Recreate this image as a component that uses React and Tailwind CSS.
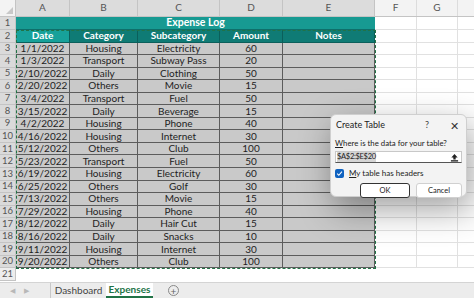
import React from 'react';

const cols = [
  { key: 'A', w: 'w-[54px]' },
  { key: 'B', w: 'w-[68px]' },
  { key: 'C', w: 'w-[82px]' },
  { key: 'D', w: 'w-[63px]' },
  { key: 'E', w: 'w-[92px]' },
];

const rows = [
  ['1/1/2022', 'Housing', 'Electricity', '60'],
  ['1/3/2022', 'Transport', 'Subway Pass', '20'],
  ['2/10/2022', 'Daily', 'Clothing', '50'],
  ['2/20/2022', 'Others', 'Movie', '15'],
  ['3/4/2022', 'Transport', 'Fuel', '50'],
  ['3/15/2022', 'Daily', 'Beverage', '15'],
  ['4/2/2022', 'Housing', 'Phone', '40'],
  ['4/16/2022', 'Housing', 'Internet', '30'],
  ['5/12/2022', 'Others', 'Club', '100'],
  ['5/23/2022', 'Transport', 'Fuel', '50'],
  ['6/19/2022', 'Housing', 'Electricity', '60'],
  ['6/25/2022', 'Others', 'Golf', '30'],
  ['7/13/2022', 'Others', 'Movie', '15'],
  ['7/29/2022', 'Housing', 'Phone', '40'],
  ['8/12/2022', 'Daily', 'Hair Cut', '15'],
  ['8/16/2022', 'Daily', 'Snacks', '10'],
  ['9/11/2022', 'Housing', 'Internet', '30'],
  ['9/20/2022', 'Others', 'Club', '100'],
];

const headers = ['Date', 'Category', 'Subcategory', 'Amount', 'Notes'];

const RowNum = ({ n, light }) => (
  <div
    className={`w-[16px] shrink-0 flex items-center justify-center text-[9.5px] text-[#555] border-r border-b border-[#c4c4c4] ${
      light ? 'bg-[#ededed]' : 'bg-[#dadada]'
    }`}
  >
    {n}
  </div>
);

const Blank = () => (
  <div className="flex-1 flex">
    <div className="w-[42px] shrink-0 border-r border-b border-[#e1e1e1]" />
    <div className="w-[41px] shrink-0 border-r border-b border-[#e1e1e1]" />
    <div className="flex-1 border-b border-[#e1e1e1]" />
  </div>
);

export default function App() {
  return (
    <div
      className="relative w-[474px] h-[298px] overflow-hidden bg-white"
      style={{ fontFamily: 'Lato, "Noto Sans", sans-serif' }}
    >
      {/* column headers */}
      <div className="flex h-[17px] bg-[#f3f3f3] border-b border-[#c4c4c4]">
        <div className="w-[16px] shrink-0 relative border-r border-[#c4c4c4]">
          <div className="absolute right-[2px] bottom-[2px] w-0 h-0 border-l-[7px] border-l-transparent border-b-[7px] border-b-[#c8c8c8]" />
        </div>
        {cols.map((c) => (
          <div
            key={c.key}
            className={`${c.w} shrink-0 flex items-end justify-center pb-[1px] text-[10px] text-[#555] bg-[#dcdcdc] border-r border-[#c4c4c4]`}
          >
            {c.key}
          </div>
        ))}
        <div className="w-[42px] shrink-0 flex items-end justify-center pb-[1px] text-[10px] text-[#555] border-r border-[#dcdcdc]">F</div>
        <div className="w-[41px] shrink-0 flex items-end justify-center pb-[1px] text-[10px] text-[#555] border-r border-[#dcdcdc]">G</div>
        <div className="flex-1" />
      </div>

      {/* row 1 */}
      <div className="flex h-[13px]">
        <RowNum n={1} />
        <div className="w-[359px] shrink-0 flex items-center justify-center bg-[#179a92] text-white text-[10.5px] font-bold border-b border-[#0f6f6a]">
          Expense Log
        </div>
        <Blank />
      </div>

      {/* row 2 */}
      <div className="flex h-[12.5px]">
        <RowNum n={2} />
        {headers.map((h, i) => (
          <div
            key={h}
            className={`${cols[i].w} shrink-0 flex items-center justify-center text-white text-[10px] font-bold border-r border-b border-[#0b5f5b] ${
              i === 0 ? 'bg-[#17a19a]' : 'bg-[#0f7b75]'
            }`}
          >
            {h}
          </div>
        ))}
        <Blank />
      </div>

      {/* data rows */}
      {rows.map((r, ri) => (
        <div key={ri} className="flex h-[12.55px]">
          <RowNum n={ri + 3} />
          {[...r, ''].map((v, i) => (
            <div
              key={i}
              className={`${cols[i].w} shrink-0 flex items-center justify-center text-[10px] text-[#1e1e1e] bg-[#c9c9c9] border-r border-b border-[#5c5c5c]`}
            >
              {v}
            </div>
          ))}
          <Blank />
        </div>
      ))}

      {/* row 21 */}
      <div className="flex h-[13px]">
        <RowNum n={21} light />
        <div className="flex-1" />
      </div>

      {/* selection marquee */}
      <div className="absolute left-[16px] top-[30px] w-[360px] h-[239px] border border-dashed border-[#217346] pointer-events-none" />

      {/* sheet tabs */}
      <div className="absolute left-0 right-0 bottom-0 h-[16px] flex items-stretch bg-[#ececec] border-t border-[#d4d4d4] text-[10px]">
        <div className="w-[50px] flex items-center gap-[9px] pl-[10px] text-[#b8b8b8] text-[7px]">
          <span>◀</span>
          <span>▶</span>
        </div>
        <div className="w-[56px] flex items-center justify-center text-[#444] border-l border-[#c8c8c8]">Dashboard</div>
        <div className="w-[47px] flex items-center justify-center font-bold text-[#217346] bg-white border-b-2 border-[#217346]">
          Expenses
        </div>
        <div className="w-[41px] flex items-center justify-center">
          <div className="w-[11px] h-[11px] rounded-full border border-[#888] flex items-center justify-center text-[#666] text-[10px] leading-none">
            +
          </div>
        </div>
      </div>

      {/* Create Table dialog */}
      <div className="absolute left-[330px] top-[114px] w-[137px] h-[83px] bg-[#f3f3f3] rounded-[6px] border border-[#cfcfcf] shadow-[4px_12px_34px_rgba(0,0,0,0.38)] px-[4px] pt-[3px] whitespace-nowrap">
        <div className="flex items-center h-[14px] pl-[1px] text-[9px] text-[#222]">
          <span className="w-[87px] shrink-0">Create Table</span>
          <span className="w-[8px] shrink-0 text-center text-[#444]">?</span>
          <span className="ml-[19px] text-[11px] text-[#333] leading-none">✕</span>
        </div>
        <div className="mt-[6px] text-[7.8px] text-[#222] leading-[11px]">
          <span className="underline">W</span>here is the data for your table?
        </div>
        <div className="mt-[2px] h-[12px] flex items-center bg-white border border-[#c8c8c8] border-b-[#555] pl-[1px]">
          <span className="bg-[#d5d5d5] text-[7.5px] text-[#222] leading-[10px] tracking-[-0.3px]">$A$2:$E$20</span>
          <span className="flex-1" />
          <svg width="9" height="9" viewBox="0 0 10 10" className="mr-[2px]">
            <rect x="1" y="8" width="8" height="1.5" fill="#222" />
            <path d="M5 1 L8.5 5 L6.3 5 L6.3 7.2 L3.7 7.2 L3.7 5 L1.5 5 Z" fill="#222" />
          </svg>
        </div>
        <div className="mt-[4px] flex items-center gap-[5px] text-[8px] text-[#222]">
          <div className="w-[9px] h-[9px] rounded-[2px] bg-[#0f62c0] flex items-center justify-center">
            <svg width="7" height="7" viewBox="0 0 8 8">
              <path d="M1.3 4.2 L3.2 6 L6.8 1.8" stroke="white" strokeWidth="1.2" fill="none" />
            </svg>
          </div>
          <span>
            <span className="underline">M</span>y table has headers
          </span>
        </div>
        <div className="mt-[4px] flex gap-[6px] pl-[25px] text-[7.5px] text-[#222]">
          <div className="w-[50px] h-[15px] flex items-center justify-center bg-white rounded-[3px] border-[1.5px] border-[#333]">OK</div>
          <div className="w-[46px] h-[15px] flex items-center justify-center bg-white rounded-[3px] border border-[#d0d0d0]">Cancel</div>
        </div>
      </div>
    </div>
  );
}
